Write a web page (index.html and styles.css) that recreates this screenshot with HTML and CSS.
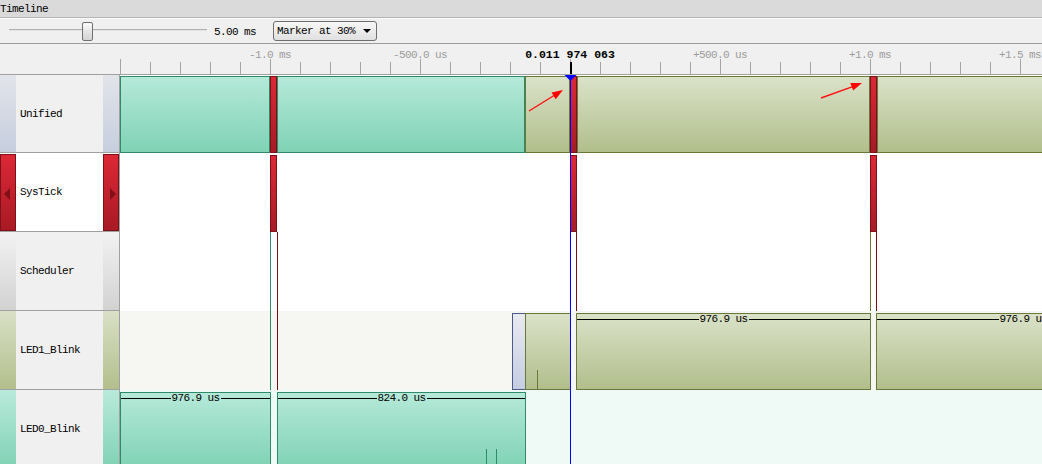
FILE: index.html
```html
<!DOCTYPE html>
<html lang="en">
<head>
  <meta charset="UTF-8">
  <title>Timeline</title>
  <link rel="stylesheet" href="styles.css">
</head>
<body>
<div class="app">
  <div class="titlebar">Timeline</div>

  <div class="toolbar">
    <div class="slider">
      <div class="slider-track"></div>
      <div class="slider-thumb"></div>
    </div>
    <span class="zoom-value">5.00 ms</span>
    <div class="select">Marker at 30%<span class="caret"></span></div>
  </div>

  <div class="ruler">
    <div class="scale">
      <div class="ticks minor"></div>
      <div class="ticks major"></div>
      <div class="cursor-tick"></div>
      <span class="tick-label" style="left:150px">-1.0 ms</span>
      <span class="tick-label" style="left:300px">-500.0 us</span>
      <span class="tick-label now" style="left:450px">0.011 974 063</span>
      <span class="tick-label" style="left:600px">+500.0 us</span>
      <span class="tick-label" style="left:750px">+1.0 ms</span>
      <span class="tick-label" style="left:900px">+1.5 ms</span>
    </div>
  </div>

  <div class="rows">
    <!-- Unified -->
    <div class="row first unified">
      <div class="label"><div class="strip"></div><div class="name">Unified</div><div class="strip"></div></div>
      <div class="track">
        <div class="blk teal" style="left:0;width:150px"></div>
        <div class="blk red" style="left:150px;width:7px"></div>
        <div class="blk teal" style="left:157px;width:248px"></div>
        <div class="blk olive" style="left:405px;width:45px"></div>
        <div class="blk red" style="left:450px;width:7px"></div>
        <div class="blk olive" style="left:457px;width:293px"></div>
        <div class="blk red" style="left:750px;width:7px"></div>
        <div class="blk olive" style="left:757px;width:300px"></div>
      </div>
    </div>

    <!-- SysTick -->
    <div class="row systick">
      <div class="label">
        <div class="strip"><span class="arrow-left"></span></div>
        <div class="name">SysTick</div>
        <div class="strip"><span class="arrow-right"></span></div>
      </div>
      <div class="track">
        <div class="blk red" style="left:150px;width:7px"></div>
        <div class="blk red" style="left:450px;width:7px"></div>
        <div class="blk red" style="left:750px;width:7px"></div>
      </div>
    </div>

    <!-- Scheduler -->
    <div class="row scheduler">
      <div class="label"><div class="strip"></div><div class="name">Scheduler</div><div class="strip"></div></div>
      <div class="track">
        <div class="conn c-teal" style="left:150px"></div>
        <div class="conn c-red" style="left:157px"></div>
        <div class="conn c-olive" style="left:450px"></div>
        <div class="conn c-red" style="left:456px"></div>
        <div class="conn c-olive" style="left:750px"></div>
        <div class="conn c-red" style="left:756px"></div>
      </div>
    </div>

    <!-- LED1_Blink -->
    <div class="row led1">
      <div class="label"><div class="strip"></div><div class="name">LED1_Blink</div><div class="strip"></div></div>
      <div class="track">
        <div class="conn c-teal" style="left:150px"></div>
        <div class="conn c-red" style="left:157px"></div>
        <div class="blk lav" style="left:392px;width:14px"></div>
        <div class="blk olive" style="left:405px;width:46px"><span class="mark" style="left:11px"></span></div>
        <div class="blk olive" style="left:456px;width:295px"><div class="dur"><span>976.9 us</span></div></div>
        <div class="blk olive" style="left:756px;width:295px"><div class="dur"><span>976.9 us</span></div></div>
      </div>
    </div>

    <!-- LED0_Blink -->
    <div class="row led0">
      <div class="label"><div class="strip"></div><div class="name">LED0_Blink</div><div class="strip"></div></div>
      <div class="track">
        <div class="blk teal" style="left:0;width:151px"><div class="dur"><span>976.9 us</span></div></div>
        <div class="blk teal" style="left:157px;width:249px">
          <div class="dur"><span>824.0 us</span></div>
          <span class="mark short" style="left:208px"></span>
          <span class="mark short" style="left:218px"></span>
        </div>
      </div>
    </div>
  </div>

  <!-- marker line and the two red annotation arrows -->
  <svg class="overlay" width="1042" height="464" viewBox="0 0 1042 464">
    <line x1="570.5" y1="75" x2="570.5" y2="464" stroke="#0000ff" stroke-width="1"/>
    <polygon points="564.5,75 576.5,75 570.5,81" fill="#0000ff"/>
    <line x1="529" y1="111" x2="554" y2="95.5" stroke="#ff1010" stroke-width="1.4"/>
    <polygon points="563,90 555.7,99.2 551.5,92.4" fill="#ff0000"/>
    <line x1="821" y1="98" x2="852" y2="86.8" stroke="#ff1010" stroke-width="1.4"/>
    <polygon points="862,83 853.1,90.6 850.3,83" fill="#ff0000"/>
  </svg>
</div>
</body>
</html>
```

FILE: styles.css
```css
body {
  margin: 0;
  background: #f0f0f0;
  font-family: "Liberation Mono", "DejaVu Sans Mono", monospace;
  font-size: 11px;
  letter-spacing: -0.6px;
  color: #000;
  overflow: hidden;
}

.app {
  position: relative;
  width: 1042px;
  height: 464px;
  overflow: hidden;
}

/* title + toolbar */
.titlebar {
  height: 17px;
  line-height: 19px;
  background: #dadada;
  border-bottom: 1px solid #b4b4b4;
  overflow: hidden;
}

.toolbar {
  height: 24px;
  background: #f0f0f0;
  border-top: 1px solid #fbfbfb;
  border-bottom: 1px solid #9c9c9c;
  display: flex;
  align-items: center;
}

.slider {
  position: relative;
  width: 198px;
  height: 19px;
  margin-left: 9px;
}

.slider-track {
  position: absolute;
  left: 0;
  right: 0;
  top: 7px;
  height: 1px;
  background: #b0b0b0;
  border-bottom: 1px solid #e4e4e4;
}

.slider-thumb {
  position: absolute;
  left: 73px;
  top: 0;
  width: 9px;
  height: 17px;
  border: 1px solid #707070;
  border-radius: 2px;
  background: linear-gradient(#fcfcfc, #e2e2e2 55%, #d4d4d4);
}

.zoom-value {
  margin-left: 7px;
  padding-top: 1px;
}

.select {
  margin-left: 17px;
  width: 104px;
  height: 20px;
  box-sizing: border-box;
  border: 1px solid #6e6e6e;
  border-radius: 3px;
  background: linear-gradient(#f8f8f8, #ececec 50%, #e0e0e0);
  display: flex;
  align-items: center;
  padding-left: 3px;
}

.caret {
  margin-left: auto;
  margin-right: 5px;
  width: 0;
  height: 0;
  border-left: 4px solid transparent;
  border-right: 4px solid transparent;
  border-top: 4px solid #000;
}

/* ruler */
.ruler {
  height: 30px;
  border-bottom: 1px solid #a0a0a0;
  background: #f0f0f0;
}

.scale {
  position: relative;
  margin-left: 120px;
  height: 30px;
}

.ticks {
  position: absolute;
  left: 0;
  right: 0;
  bottom: 0;
}

.ticks.minor {
  top: 18px;
  background: repeating-linear-gradient(90deg, #a4a4a4 0 1px, transparent 1px 30px);
}

.ticks.major {
  top: 15px;
  background: repeating-linear-gradient(90deg, #a4a4a4 0 1px, transparent 1px 150px);
}

.cursor-tick {
  position: absolute;
  left: 450px;
  width: 2px;
  top: 18px;
  bottom: 0;
  background: #000;
}

.tick-label {
  position: absolute;
  top: 5px;
  line-height: 12px;
  transform: translateX(-50%);
  color: #9c9c9c;
  white-space: nowrap;
}

.tick-label.now {
  color: #000;
  font-weight: bold;
  font-size: 11.5px;
  letter-spacing: 0;
}

/* rows */
.row {
  display: flex;
  height: 79px;
}

.row.first {
  height: 78px;
}

.label {
  flex: none;
  width: 120px;
  box-sizing: border-box;
  border-right: 1px solid #a0a0a0;
  border-bottom: 1px solid #a0a0a0;
  background: #f0f0f0;
  display: flex;
}

.strip {
  width: 16px;
  flex: none;
  position: relative;
  box-sizing: border-box;
}

.name {
  flex: 1;
  padding-left: 4px;
  display: flex;
  align-items: center;
}

.unified .strip { background: linear-gradient(#e2e4ea, #c6cede); }
.scheduler .strip { background: linear-gradient(#f2f2f2, #d2d2d2); }
.led1 .strip { background: linear-gradient(#d9e0c6, #b3bf8d); }
.led0 .strip { background: linear-gradient(#b9eadb, #80d2b5); }

.systick .label { background: #fff; }
.systick .strip {
  margin-top: 1px;
  border: 1px solid #7e1018;
  background: linear-gradient(#dc2836, #a81a24);
}

.arrow-left,
.arrow-right {
  position: absolute;
  top: 33px;
  width: 0;
  height: 0;
  border-top: 6px solid transparent;
  border-bottom: 6px solid transparent;
}

.arrow-left {
  left: 3px;
  border-right: 6px solid #801018;
}

.arrow-right {
  right: 2px;
  border-left: 6px solid #801018;
}

.track {
  position: relative;
  flex: 1;
  overflow: hidden;
  background: #fff;
}

.led1 .track { background: #f6f7f2; }
.led0 .track { background: #eff9f5; }

/* timeline blocks */
.blk {
  position: absolute;
  top: 2px;
  bottom: 0;
  box-sizing: border-box;
  border: 1px solid;
}

.unified .blk { top: 1px; }

.teal {
  border-color: #2f8a68;
  background: linear-gradient(#b6e9d9, #7fd2b5);
}

.olive {
  border-color: #68783a;
  background: linear-gradient(#dae2c8, #b1be8b);
}

.red {
  border-color: #7e1018;
  background: linear-gradient(#dc2836, #a41c26);
}

.lav {
  border-color: #4c5a8a;
  background: linear-gradient(#e9e9f1, #c5cde2);
}

.conn {
  position: absolute;
  top: 0;
  bottom: 0;
  width: 1px;
}

.c-teal { background: #2f8a68; }
.c-olive { background: #68783a; }
.c-red { background: #7a0c12; }

.mark {
  position: absolute;
  bottom: 0;
  width: 1px;
  height: 19px;
  background: #68783a;
}

.mark.short {
  top: 56px;
  height: 20px;
  background: #2f8a68;
}

.dur {
  position: absolute;
  top: 0;
  left: 0;
  right: 0;
  height: 11px;
  display: flex;
  align-items: center;
}

.dur::before,
.dur::after {
  content: "";
  flex: 1;
  height: 1px;
  background: #000;
}

.dur span {
  padding: 0 1px;
  line-height: 11px;
  white-space: nowrap;
}

.overlay {
  position: absolute;
  top: 0;
  left: 0;
  pointer-events: none;
}
```
